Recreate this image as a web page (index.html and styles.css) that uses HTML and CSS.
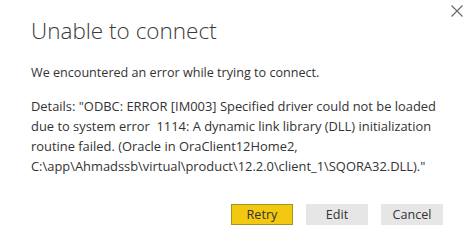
FILE: index.html
```html
<!DOCTYPE html>
<html lang="en">
<head>
    <meta charset="UTF-8">
    <title>Unable to connect</title>
    <link rel="stylesheet" href="styles.css">
</head>
<body>
    <div class="dialog">
        <button class="close" aria-label="Close">
            <svg width="12" height="12" viewBox="0 0 12 12">
                <path d="M0.5 0.5 L11.5 11.5 M11.5 0.5 L0.5 11.5" stroke="#666" stroke-width="1.1" fill="none"/>
            </svg>
        </button>
        <h1>Unable to connect</h1>
        <p class="lead">We encountered an error while trying to connect.</p>
        <p class="details">Details: "ODBC: ERROR [IM003] Specified driver could not be loaded due to system error&nbsp; 1114: A dynamic link library (DLL) initialization routine failed. (Oracle in OraClient12Home2, C:\app\Ahmadssb\virtual\product\12.2.0\client_1\SQORA32.DLL)."</p>
        <div class="actions">
            <button class="btn primary">Retry</button>
            <button class="btn">Edit</button>
            <button class="btn">Cancel</button>
        </div>
    </div>
</body>
</html>
```

FILE: styles.css
```css
* {
    margin: 0;
    padding: 0;
    box-sizing: border-box;
}

body {
    background: #ffffff;
    color: #333333;
    font-family: 'Open Sans', 'Segoe UI', sans-serif;
}

.dialog {
    position: relative;
    width: 474px;
    height: 250px;
    padding: 17px 31px 0 31px;
}

.close {
    position: absolute;
    top: 5px;
    right: 11px;
    background: none;
    border: none;
    width: 12px;
    height: 12px;
}

.close svg {
    display: block;
}

h1 {
    font-weight: 300;
    font-size: 22.5px;
    line-height: 28px;
    color: #3a3a3a;
}

.lead {
    margin-top: 18px;
    font-size: 12.6px;
    line-height: 20px;
}

.details {
    margin-top: 13px;
    font-size: 12.9px;
    line-height: 20px;
    width: 410px;
}

.actions {
    display: flex;
    justify-content: flex-end;
    gap: 13px;
    margin-top: 28px;
}

.btn {
    width: 62px;
    height: 21px;
    background: #e6e6e6;
    border: 1px solid #e6e6e6;
    color: #333333;
    font-family: 'Open Sans', 'Segoe UI', sans-serif;
    font-size: 12.6px;
}

.btn.primary {
    background: #f2c811;
    border-color: #a89225;
}
```
